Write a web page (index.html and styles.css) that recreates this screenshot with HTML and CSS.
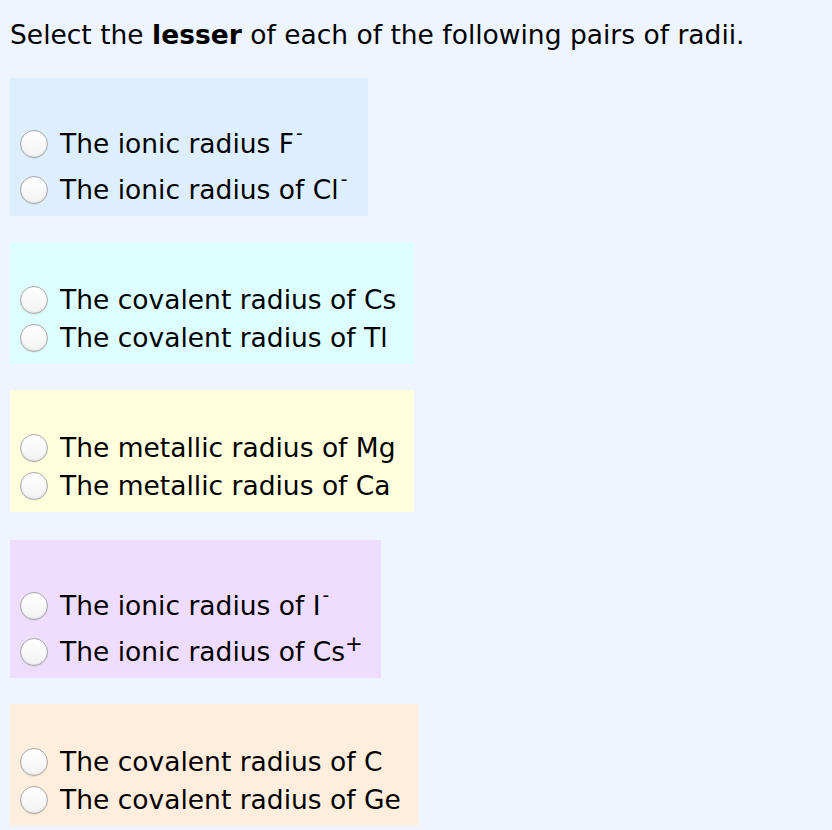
FILE: index.html
```html
<!DOCTYPE html>
<html lang="en">
<head>
    <meta charset="UTF-8">
    <title>Atomic radii</title>
    <link rel="stylesheet" href="styles.css">
</head>
<body>
    <p class="prompt">Select the <b>lesser</b> of each of the following pairs of radii.</p>

    <div class="pair pair-blue">
        <label class="choice raised"><input type="radio" name="q1"><span>The ionic radius F<sup class="minus">-</sup></span></label>
        <label class="choice raised"><input type="radio" name="q1"><span>The ionic radius of Cl<sup class="minus">-</sup></span></label>
    </div>

    <div class="pair pair-cyan">
        <label class="choice"><input type="radio" name="q2"><span>The covalent radius of Cs</span></label>
        <label class="choice"><input type="radio" name="q2"><span>The covalent radius of Tl</span></label>
    </div>

    <div class="pair pair-yellow">
        <label class="choice"><input type="radio" name="q3"><span>The metallic radius of Mg</span></label>
        <label class="choice"><input type="radio" name="q3"><span>The metallic radius of Ca</span></label>
    </div>

    <div class="pair pair-purple">
        <label class="choice raised"><input type="radio" name="q4"><span>The ionic radius of I<sup class="minus">-</sup></span></label>
        <label class="choice raised"><input type="radio" name="q4"><span>The ionic radius of Cs<sup class="plus">+</sup></span></label>
    </div>

    <div class="pair pair-peach">
        <label class="choice"><input type="radio" name="q5"><span>The covalent radius of C</span></label>
        <label class="choice"><input type="radio" name="q5"><span>The covalent radius of Ge</span></label>
    </div>
</body>
</html>
```

FILE: styles.css
```css
* {
    box-sizing: border-box;
}
body {
    margin: 0;
    padding: 0 10px;
    background: #eef5ff;
    color: #000;
    font-family: 'DejaVu Sans', Verdana, sans-serif;
    font-size: 26.5px;
}
.prompt {
    margin: 20px 0 28px;
    line-height: 30px;
}
.pair {
    width: fit-content;
    display: flex;
    flex-direction: column;
    padding: 39px 18px 7px 10px;
    margin-bottom: 26px;
}
.pair-blue { background: #ddeeff; padding-right: 21px; }
.pair-cyan { background: #ddffff; }
.pair-yellow { background: #ffffdd; margin-bottom: 0; }
.pair-purple { background: #eeddff; margin-top: 28px; }
.pair-peach { background: #ffeedd; }

.choice {
    display: flex;
    align-items: center;
    height: 38px;
    line-height: 30px;
    white-space: nowrap;
}
.choice.raised {
    margin-top: 8px;
}
.choice span {
    margin-left: 12px;
}
.choice input {
    appearance: none;
    -webkit-appearance: none;
    width: 28px;
    height: 28px;
    margin: 0;
    border-radius: 50%;
    border: 1px solid #a8a8a8;
    background: linear-gradient(#ffffff, #f3f3f3);
    box-shadow: inset 0 -1px 2px rgba(0, 0, 0, 0.08), 0 1px 0 rgba(0, 0, 0, 0.06);
    flex-shrink: 0;
}
sup {
    font-size: 0.7em;
    line-height: 0;
    vertical-align: 0.4em;
}
sup.minus {
    margin-left: 2px;
    vertical-align: 0.7em;
}
sup.plus {
    font-size: 0.8em;
    vertical-align: 0.45em;
}
```
